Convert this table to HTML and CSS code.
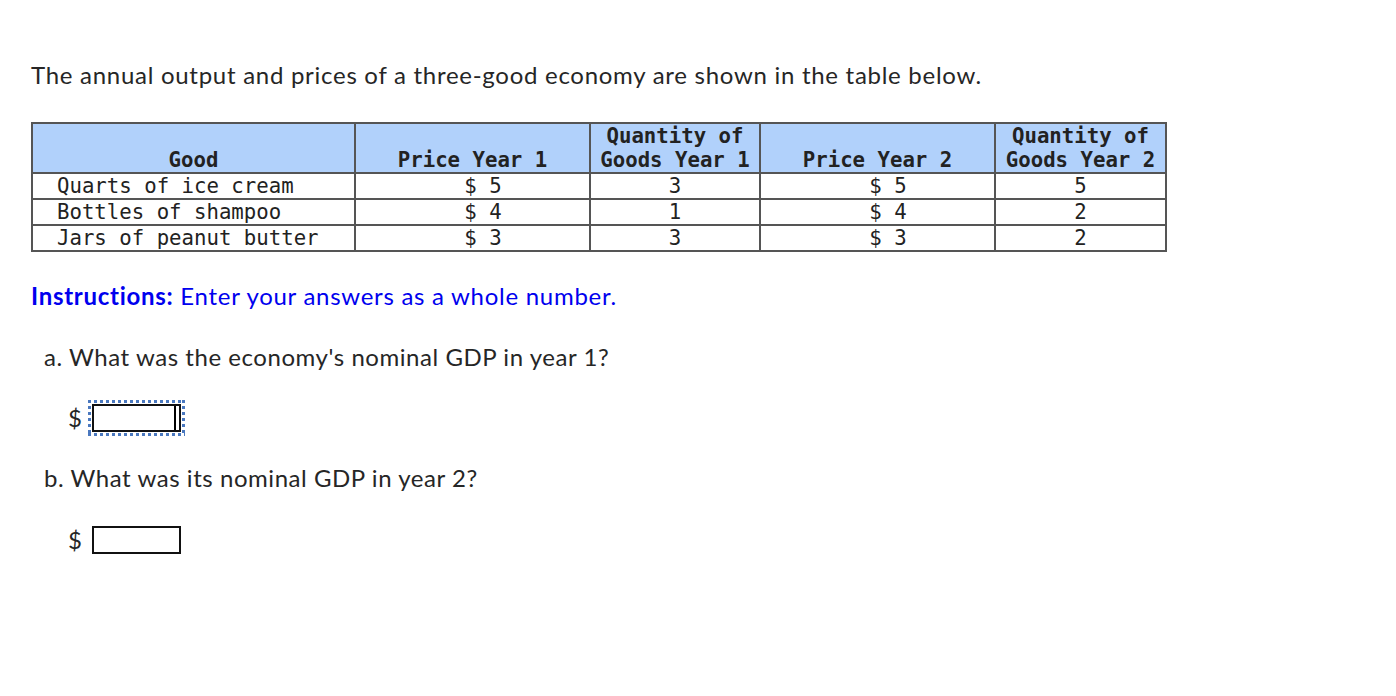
FILE: index.html
```html
<!DOCTYPE html>
<html lang="en">
<head>
<meta charset="utf-8">
<title>Nominal GDP</title>
<link rel="stylesheet" href="styles.css">
</head>
<body>
<div class="page">
  <p class="intro">The annual output and prices of a three-good economy are shown in the table below.</p>
  <table class="data">
    <colgroup>
      <col class="c-good"><col class="c-p1"><col class="c-q1"><col class="c-p2"><col class="c-q2">
    </colgroup>
    <thead>
      <tr>
        <th>Good</th>
        <th>Price Year 1</th>
        <th>Quantity of<br>Goods Year 1</th>
        <th>Price Year 2</th>
        <th>Quantity of<br>Goods Year 2</th>
      </tr>
    </thead>
    <tbody>
      <tr><td class="name">Quarts of ice cream</td><td class="price">$ 5</td><td>3</td><td class="price">$ 5</td><td>5</td></tr>
      <tr><td class="name">Bottles of shampoo</td><td class="price">$ 4</td><td>1</td><td class="price">$ 4</td><td>2</td></tr>
      <tr><td class="name">Jars of peanut butter</td><td class="price">$ 3</td><td>3</td><td class="price">$ 3</td><td>2</td></tr>
    </tbody>
  </table>
  <p class="instr"><b>Instructions:</b> Enter your answers as a whole number.</p>
  <p class="question q-a">a. What was the economy's nominal GDP in year 1?</p>
  <div class="answer ans-a">
    <span class="dollar">$</span>
    <span class="frame focused"><span class="field"><span class="caret"></span></span></span>
  </div>
  <p class="question q-b">b. What was its nominal GDP in year 2?</p>
  <div class="answer ans-b">
    <span class="dollar">$</span>
    <span class="frame"><span class="field"></span></span>
  </div>
</div>
</body>
</html>
```

FILE: styles.css
```css
html, body {
  margin: 0;
  padding: 0;
  background: #ffffff;
}

.page {
  padding: 60px 0 0 31px;
  font-family: Lato, "Noto Sans", sans-serif;
  font-size: 24px;
  line-height: 30px;
  letter-spacing: 0.72px;
  color: #262626;
}

.intro {
  margin: 0 0 32px 0;
}

.data {
  border-collapse: collapse;
  table-layout: fixed;
  width: 1134px;
  font-family: "DejaVu Sans Mono", monospace;
  font-size: 20.7px;
  line-height: 24px;
  letter-spacing: 0;
  color: #222;
  margin: 0 0 29px 0;
}

.c-good { width: 323px; }
.c-p1 { width: 235px; }
.c-q1 { width: 170px; }
.c-p2 { width: 235px; }
.c-q2 { width: 171px; }

.data th,
.data td {
  border: 2px solid #555;
  padding: 0;
  text-align: center;
  white-space: nowrap;
}

.data th {
  background: #b1d1fb;
  font-weight: bold;
  vertical-align: bottom;
}

.data td.name {
  text-align: left;
  padding-left: 24px;
}

.data td.price {
  padding-left: 21px;
}

.instr {
  margin: 0 0 31px 0;
  color: #0000ee;
}

.instr b {
  font-weight: 700;
}

.question {
  margin: 0;
  padding-left: 13px;
  letter-spacing: 0.55px;
}

.answer {
  display: flex;
  align-items: center;
  padding-left: 37px;
}

.ans-a { margin: 28px 0 27px 0; }
.ans-b { margin: 29px 0 0 0; }

.dollar {
  width: 20px;
  line-height: 28px;
}

.frame {
  display: block;
  padding: 4px;
}

.frame.focused {
  background:
    repeating-linear-gradient(to right, #4a78bf 0 3px, transparent 3px 6px) top left / 100% 3px no-repeat,
    repeating-linear-gradient(to right, #4a78bf 0 3px, transparent 3px 6px) bottom left / 100% 3px no-repeat,
    repeating-linear-gradient(to bottom, #4a78bf 0 3px, transparent 3px 6px) top left / 3px 100% no-repeat,
    repeating-linear-gradient(to bottom, #4a78bf 0 3px, transparent 3px 6px) top right / 3px 100% no-repeat;
}

.field {
  display: flex;
  justify-content: flex-end;
  align-items: center;
  box-sizing: border-box;
  width: 89px;
  height: 28px;
  border: 2px solid #111;
  padding-right: 3px;
  background: #fff;
}

.caret {
  display: block;
  width: 2px;
  height: 24px;
  background: #000;
}
```
